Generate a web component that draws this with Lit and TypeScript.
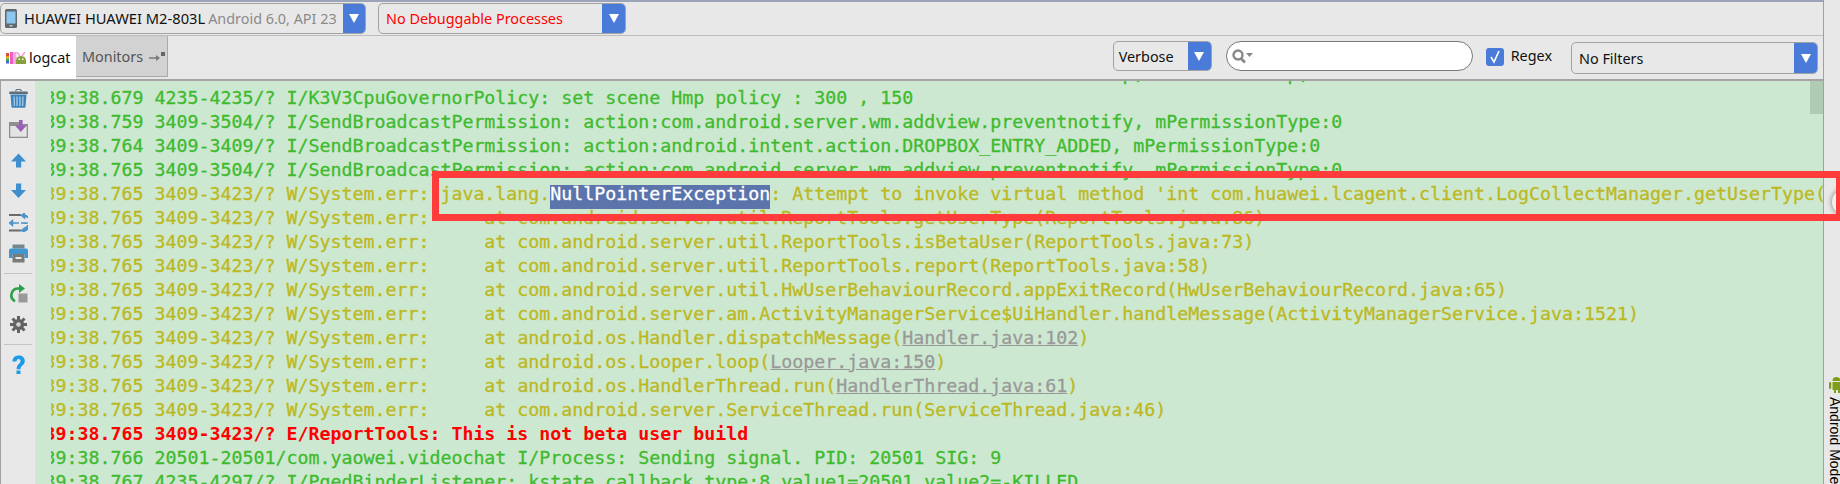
import { LitElement, html, css, svg } from "lit";
import { customElement } from "lit/decorators.js";

type Kind = "i" | "w" | "e" | "i top";
interface Row { kind: Kind; parts: unknown; }

const w = "39:38.765 3409-3423/? W/System.err:     at ";
const link = (t: string) => html`<span class="link">${t}</span>`;

const rows: Row[] = [
  { kind: "i top", parts: "p,".padEnd(15) + "p," },
  { kind: "i", parts: "39:38.679 4235-4235/? I/K3V3CpuGovernorPolicy: set scene Hmp policy : 300 , 150" },
  { kind: "i", parts: "39:38.759 3409-3504/? I/SendBroadcastPermission: action:com.android.server.wm.addview.preventnotify, mPermissionType:0" },
  { kind: "i", parts: "39:38.764 3409-3409/? I/SendBroadcastPermission: action:android.intent.action.DROPBOX_ENTRY_ADDED, mPermissionType:0" },
  { kind: "i", parts: "39:38.765 3409-3504/? I/SendBroadcastPermission: action:com.android.server.wm.addview.preventnotify, mPermissionType:0" },
  { kind: "w", parts: html`39:38.765 3409-3423/? W/System.err: java.lang.<span class="sel">NullPointerException</span>: Attempt to invoke virtual method 'int com.huawei.lcagent.client.LogCollectManager.getUserType()' on a null object reference` },
  { kind: "w", parts: w + "com.android.server.util.ReportTools.getUserType(ReportTools.java:86)" },
  { kind: "w", parts: w + "com.android.server.util.ReportTools.isBetaUser(ReportTools.java:73)" },
  { kind: "w", parts: w + "com.android.server.util.ReportTools.report(ReportTools.java:58)" },
  { kind: "w", parts: w + "com.android.server.util.HwUserBehaviourRecord.appExitRecord(HwUserBehaviourRecord.java:65)" },
  { kind: "w", parts: w + "com.android.server.am.ActivityManagerService$UiHandler.handleMessage(ActivityManagerService.java:1521)" },
  { kind: "w", parts: html`${w}android.os.Handler.dispatchMessage(${link("Handler.java:102")})` },
  { kind: "w", parts: html`${w}android.os.Looper.loop(${link("Looper.java:150")})` },
  { kind: "w", parts: html`${w}android.os.HandlerThread.run(${link("HandlerThread.java:61")})` },
  { kind: "w", parts: w + "com.android.server.ServiceThread.run(ServiceThread.java:46)" },
  { kind: "e", parts: "39:38.765 3409-3423/? E/ReportTools: This is not beta user build" },
  { kind: "i", parts: "39:38.766 20501-20501/com.yaowei.videochat I/Process: Sending signal. PID: 20501 SIG: 9" },
  { kind: "i", parts: "39:38.767 4235-4297/? I/PgedBinderListener: kstate_callback type:8 value1=20501 value2=-KILLED" },
];

const tri = html`<svg class="tri" viewBox="0 0 10 9" width="10" height="9"><path d="M0 0h10L5 9z" fill="#fff"/></svg>`;

const sideIcons = [
  svg`<path d="M6.500 2.200 7.500 .5h4l1 1.700" fill="none" stroke="#6b7884" stroke-width="1.200"/><path d="M.5 2.500h18l.5 2.500H0z" fill="#5f6e7b"/><path d="M1.500 5.500h16l-1 12.500q-.1.800-1 .8H3.500q-.9 0-1-.8z" fill="#3f83bd"/><path d="M5 7.500l.4 9.500M8 7.500v9.500M11 7.500v9.500M14 7.500l-.4 9.500" stroke="#a5cbe6" stroke-width="1.300"/>`,
  svg`<path d="M0 2h11v2h8v14H0z" fill="#8f8f8f"/><rect x="1.300" y="6" width="16.400" height="10.700" fill="#e4e4e4"/><path d="M10 0h3.600v5.500h4L11.800 12 6 5.500h4z" fill="#9a5fb8"/>`,
  svg`<path d="M9.500 2.500l7.500 8h-4.800v6H7v-6H2z" fill="#3d8fd0"/>`,
  svg`<path d="M7 1.500h5.200v6.500H17l-7.500 8L2 8h5z" fill="#3d8fd0"/>`,
  svg`<path d="M0 2h12M0 17.500h12" stroke="#6a6a6a" stroke-width="1.800"/><path d="M13 2.500h3.500c1.500 0 2 1 2 2.500M15.500 0l-3 2.500 3 2.500z" stroke="#4a94cc" stroke-width="1.400" fill="#4a94cc"/><path d="M2 10h8M2 10V8.500h-.1M12 10h6v1M3.500 7.500L.5 10l3 2.500z" stroke="#4a94cc" stroke-width="1.400" fill="#4a94cc"/><path d="M18.500 12v3c0 1.500-.8 2.500-2 2.500H13M15.500 15l-3 2.500 3 2z" stroke="#4a94cc" stroke-width="1.400" fill="#4a94cc"/>`,
  svg`<rect x="3.500" y="0.500" width="12" height="4" fill="#76868f"/><path d="M0 6.500q0-2 2-2h15q2 0 2 2v7.500h-3.500V10h-12v4H0z" fill="#3f96cf"/><rect x="3.500" y="10" width="12" height="8.500" fill="#7b7b7b"/><rect x="6.500" y="13" width="6" height="2" fill="#e8e8e8"/>`,
  svg`<path d="M11.500 4.500H9.500a6.800 6.800 0 0 0-3.500 12.800" stroke="#2ea04a" stroke-width="2.600" fill="none"/><path d="M10 0l6 4.500-6 4.500z" fill="#2ea04a"/><rect x="9.500" y="9.500" width="9" height="9" fill="#9a9a9a"/>`,
  svg`<path d="M9.500 1v17M1 9.500h17M3.500 3.500l12 12M15.500 3.500l-12 12" stroke="#636363" stroke-width="3"/><circle cx="9.500" cy="9.500" r="5.600" fill="#636363"/><circle cx="9.500" cy="9.500" r="2.300" fill="#d4d4d4"/>`,
  svg`<path d="M3.500 6.500C3.500 2.500 6.200.5 9.800.5c3.500 0 6 2 6 5.500 0 4.400-4.300 4.400-4.300 8.300H7.600c0-5.300 3.900-5.100 3.900-8.200 0-1.300-.7-2-1.900-2-1.400 0-2 .9-2.100 2.400zM7.500 15.500h4V19h-4z" fill="#1c9bea"/>`,
];

const logo = html`<svg class="logo" viewBox="0 0 20 12" width="20" height="12">
  <rect x="0" y="1" width="3" height="3" fill="#e0493c"/><rect x="0" y="4" width="3" height="2.500" fill="#e8a020"/><rect x="0" y="6.500" width="3" height="2.500" fill="#40a848"/><rect x="0" y="9" width="3" height="2.500" fill="#3c6cd0"/>
  <rect x="4" y="0" width="3" height="12" fill="#e95fc4"/><rect x="7" y="0" width="3.500" height="12" fill="#f8a6e0"/>
  <path d="M10 12V8.500a5 4.500 0 0 1 10 0V12z" fill="#87a03a"/><path d="M11 0l3 4M19 0l-3 4" stroke="#f0a0d8" stroke-width="1.600"/><rect x="12.500" y="6.500" width="1.500" height="1.500" fill="#fff"/><rect x="16" y="6.500" width="1.500" height="1.500" fill="#fff"/>
</svg>`;

@customElement("app-root")
export class AppRoot extends LitElement {
  static styles = css`
    :host { display: block; width: 1840px; height: 484px; overflow: hidden; background: #e8e8e8; font-family: "Noto Sans", sans-serif; }
    .root { position: relative; display: flex; width: 1840px; height: 484px; overflow: hidden; }
    .main { width: 1824px; height: 484px; display: flex; flex-direction: column; box-sizing: border-box; border-right: 1px solid #a0a0a0; flex: none; }
    .topline { height: 2px; background: #9ca4ba; margin-bottom: 1px; flex: none; }
    .bar1 { height: 33px; display: flex; align-items: center; gap: 12px; flex: none; box-sizing: border-box; padding-bottom: 2px; border-bottom: 1px solid #bdbdbd; }
    .bar2 { height: 45px; display: flex; flex: none; box-sizing: border-box; border-bottom: 2px solid #a4a4a4; align-items: flex-start; }
    .combo { display: flex; box-sizing: border-box; border: 1px solid #a2a2a2; border-radius: 5px; align-items: center; overflow: hidden; background: #e8e8e8; flex: none; }
    .combo .val { flex: 1; display: flex; align-items: center; white-space: nowrap; overflow: hidden; }
    .combo .btn { background: #4a7bd8; align-self: stretch; display: flex; align-items: center; justify-content: center; flex: none; }
    .c-device { width: 366px; height: 31px; font-size: 14.700px; color: #111; }
    .c-device .val { gap: 7px; padding-left: 4px; }
    .c-device .btn { width: 22px; }
    .dim { color: #8a8a8a; margin-left: 3px; font-size: 14.400px; }
    .c-proc { width: 248px; height: 31px; font-size: 14.400px; color: #f00; }
    .c-proc .val { padding-left: 7px; }
    .c-proc .btn { width: 23px; }
    .tab { box-sizing: border-box; display: flex; align-items: center; font-size: 14.400px; flex: none; }
    .tab-a { width: 76px; height: 43px; background: #fff; gap: 3px; padding-left: 6px; color: #111; }
    .tab-b { width: 92px; height: 41px; background: #d2d2d2; border: 1px solid #aaa; border-top: 1px solid #ccc; border-left: none; color: #555; padding-left: 6px; gap: 6px; }
    .right { margin-left: auto; display: flex; align-items: flex-start; padding-right: 5px; }
    .c-verbose { width: 99px; height: 30px; margin-top: 5px; font-size: 14.400px; color: #111; }
    .c-verbose .val { padding-left: 5px; }
    .c-verbose .btn { width: 23px; }
    .search { width: 247px; height: 30px; margin: 5px 0 0 14px; box-sizing: border-box; border: 1px solid #777; border-radius: 15px; background: #fff; display: flex; align-items: center; padding-left: 4px; flex: none; }
    .check { width: 18px; height: 18px; margin: 12px 0 0 13px; background: #4a7bd8; border-radius: 3px; display: flex; align-items: center; justify-content: center; flex: none; }
    .regex { font-size: 14.400px; color: #111; margin: 10px 0 0 7px; flex: none; }
    .c-filter { width: 247px; height: 32px; margin: 6px 0 0 19px; font-size: 14.400px; color: #111; }
    .c-filter .val { padding-left: 7px; }
    .c-filter .btn { width: 23px; }
    .body { flex: 1; min-height: 0; display: flex; }
    .side { width: 35px; flex: none; box-sizing: border-box; border-left: 1px solid #a0a0a0; padding-top: 2px; display: flex; flex-direction: column; align-items: center; }
    .side-item { height: 31px; width: 19px; display: flex; align-items: center; justify-content: center; flex: none; }
    .side-sep { height: 9px; width: 28px; flex: none; box-sizing: border-box; padding-top: 4px; }
    .side-sep::before { content: ""; display: block; height: 1px; background: #c4c4c4; }
    .log { flex: 1; min-width: 0; background: #cde8d1; padding-left: 16px; position: relative; overflow: hidden; }
    .lines { overflow: hidden; height: 100%; font-family: "DejaVu Sans Mono", monospace; font-size: 18.270px; line-height: 24px; }
    .rows { margin: -19px 0 0 -6.500px; }
    .row { white-space: pre; height: 24px; -webkit-text-stroke: 0.3px currentColor; }
    .row.top { padding-left: 1078px; }
    .row.i { color: #3fba2e; }
    .row.w { color: #bcb81f; }
    .row.e { color: #f00; font-weight: 700; -webkit-text-stroke: 0; }
    .sel { color: #fff; background: linear-gradient(#5b74ab, #5b74ab) no-repeat 0 2px / 100% 24px; padding-bottom: 5px; }
    .link { color: #999; text-decoration: underline; }
    .thumb { position: absolute; right: 0; top: 0; width: 13px; height: 33px; background: #b0cbb3; }
    .strip { width: 16px; flex: none; padding-top: 377px; box-sizing: border-box; overflow: hidden; }
    .strip svg { display: block; margin-left: 5px; }
    .vtext { writing-mode: vertical-rl; font-family: "Liberation Sans", sans-serif; font-size: 14px; color: #000; white-space: nowrap; margin: 4px 0 0 3px; line-height: 16px; }
    .redbox { position: absolute; left: 432px; top: 171px; width: 1408px; height: 50px; box-sizing: border-box; border: 7px solid #ff3b3b; border-right-width: 4px; pointer-events: none; z-index: 2; }
    .bubble { position: absolute; left: 1832px; top: 189px; width: 26px; height: 26px; border-radius: 50%; background: #f1f1f1; box-shadow: 0 0 4px 1px #999; z-index: 1; }
    .bubble::after { content: ""; position: absolute; left: 4px; top: 5px; width: 16px; height: 16px; border-radius: 50%; background: #1f9a77; }
  `;

  render() {
    return html`<div class="root">
      <div class="main">
        <div class="topline"></div>
        <div class="bar1">
          <div class="combo c-device">
            <div class="val">
              <svg viewBox="0 0 12 19" width="12" height="19"><rect x="0" y="0" width="12" height="19" rx="1.500" fill="#5f6a70"/><rect x="1.500" y="2.500" width="9" height="12" fill="#8cc6ec"/><rect x="4.500" y="16" width="3" height="1.500" fill="#c8c8c8"/></svg>
              <span>HUAWEI HUAWEI M2-803L<span class="dim">Android 6.0, API 23</span></span>
            </div>
            <div class="btn">${tri}</div>
          </div>
          <div class="combo c-proc">
            <div class="val">No Debuggable Processes</div>
            <div class="btn">${tri}</div>
          </div>
        </div>
        <div class="bar2">
          <div class="tab tab-a">${logo}<span>logcat</span></div>
          <div class="tab tab-b"><span>Monitors</span>
            <svg viewBox="0 0 16 12" width="16" height="12"><path d="M0 7h8" stroke="#777" stroke-width="1.500"/><path d="M7 4l4 3-4 3z" fill="#777"/><rect x="12" y="1" width="4" height="4" fill="#666"/></svg>
          </div>
          <div class="right">
            <div class="combo c-verbose"><div class="val">Verbose</div><div class="btn">${tri}</div></div>
            <div class="search">
              <svg viewBox="0 0 24 16" width="24" height="16"><circle cx="7" cy="7" r="4.500" fill="none" stroke="#888" stroke-width="2.400"/><path d="M10 10.500l4 4" stroke="#888" stroke-width="2.600"/><path d="M15 5h7l-3.500 4z" fill="#888"/></svg>
            </div>
            <div class="check"><svg viewBox="0 0 12 14" width="12" height="14"><path d="M2 7l3 5 5-11" fill="none" stroke="#fff" stroke-width="1.600"/></svg></div>
            <div class="regex">Regex</div>
            <div class="combo c-filter"><div class="val">No Filters</div><div class="btn">${tri}</div></div>
          </div>
        </div>
        <div class="body">
          <div class="side">
            ${sideIcons.slice(0, 6).map((p) => this.icon(p))}
            <div class="side-sep"></div>
            ${sideIcons.slice(6, 8).map((p) => this.icon(p))}
            <div class="side-sep"></div>
            ${this.icon(sideIcons[8])}
          </div>
          <div class="log">
            <div class="lines"><div class="rows">
              ${rows.map((r) => html`<div class="row ${r.kind}">${r.parts}</div>`)}
            </div></div>
            <div class="thumb"></div>
          </div>
        </div>
      </div>
      <div class="strip">
        <svg viewBox="0 0 11 16" width="11" height="16"><path d="M3.500 4a4 4 0 0 1 8 0z" fill="#7f9c1a"/><rect x="3.500" y="5" width="8" height="8" fill="#7f9c1a"/><rect x="0" y="5" width="2.200" height="7" rx="1" fill="#7f9c1a"/><rect x="5" y="13" width="2" height="3" fill="#7f9c1a"/><rect x="9" y="13" width="2" height="3" fill="#7f9c1a"/></svg>
        <div class="vtext">Android Model</div>
      </div>
      <div class="bubble"></div>
      <div class="redbox"></div>
    </div>`;
  }

  icon(p: unknown) {
    return html`<div class="side-item"><svg viewBox="0 0 19 19" width="19" height="19">${p}</svg></div>`;
  }
}
